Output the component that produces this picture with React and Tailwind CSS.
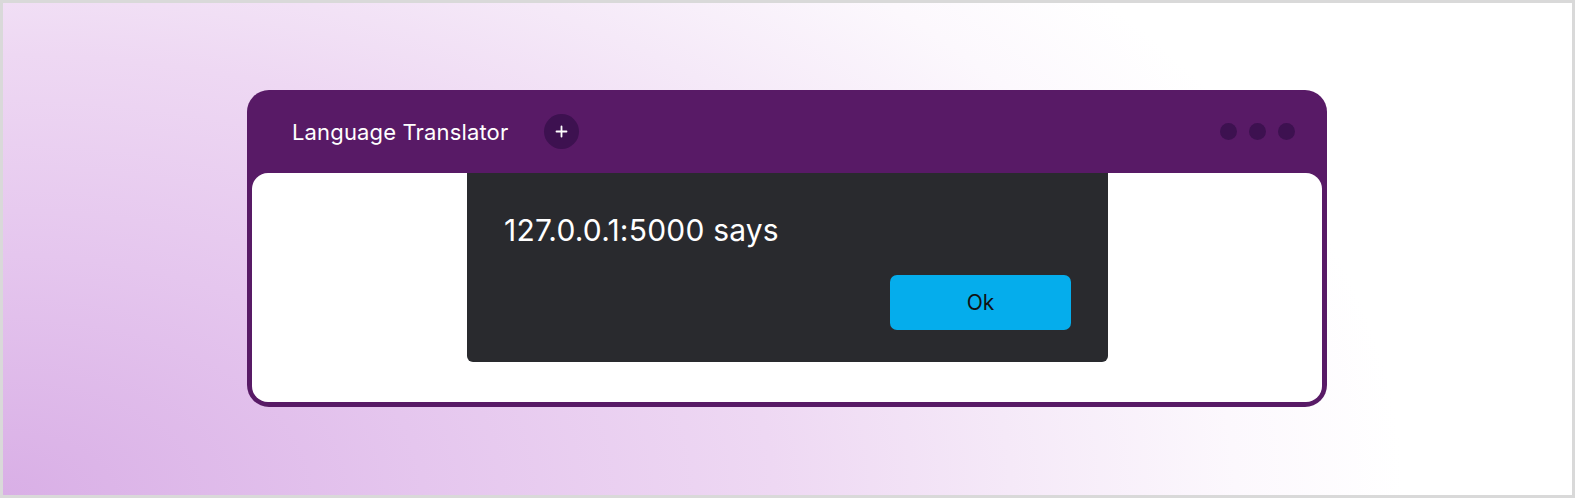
export default function App() {
  return (
    <div
      className="w-[1575px] h-[498px] border-[3px] border-[#d9d9d9] pl-[244px] pt-[87px] overflow-hidden"
      style={{
        background:
          "radial-gradient(1400px 800px at 0% 100%, #d9afe6 0%, #e5c6ee 30%, #eed8f3 55%, #f5e9f8 72%, #fcf8fd 88%, #ffffff 100%)",
      }}
    >
      <div className="w-[1080px] h-[317px] rounded-[22px] bg-[#581a66] flex flex-col">
        <div className="h-[83px] flex items-center pl-[45px] pr-[32px] shrink-0">
          <span
            className="text-white text-[22px] leading-none tracking-[0.15px]"
            style={{ fontFamily: "Inter, 'Open Sans', sans-serif" }}
          >
            Language Translator
          </span>
          <div className="ml-[36px] w-[35px] h-[35px] rounded-full bg-[#3d1150] flex items-center justify-center">
            <svg width="13" height="13" viewBox="0 0 13 13">
              <path d="M6.5 1.5v10M1.5 6.5h10" stroke="#fff" strokeWidth="1.8" strokeLinecap="round" />
            </svg>
          </div>
          <div className="ml-auto flex gap-[12px]">
            <div className="w-[17px] h-[17px] rounded-full bg-[#3d1150]" />
            <div className="w-[17px] h-[17px] rounded-full bg-[#3d1150]" />
            <div className="w-[17px] h-[17px] rounded-full bg-[#3d1150]" />
          </div>
        </div>
        <div className="flex-1 mx-[5px] mb-[5px] bg-white rounded-[16px] pl-[215px]">
          <div className="w-[641px] h-[189px] bg-[#292a2e] rounded-b-[6px] flex flex-col pl-[37px] pr-[37px] pt-[42px]">
            <div
              className="text-white text-[30px] leading-none tracking-[0.2px]"
              style={{ fontFamily: "Inter, 'Liberation Sans', sans-serif" }}
            >
              127.0.0.1:5000 says
            </div>
            <div className="mt-[30px] flex justify-end">
              <button
                className="w-[181px] h-[55px] rounded-[7px] bg-[#05adec] text-[#111] text-[21px] flex items-center justify-center"
                style={{ fontFamily: "Inter, 'Open Sans', sans-serif" }}
              >
                Ok
              </button>
            </div>
          </div>
        </div>
      </div>
    </div>
  );
}
